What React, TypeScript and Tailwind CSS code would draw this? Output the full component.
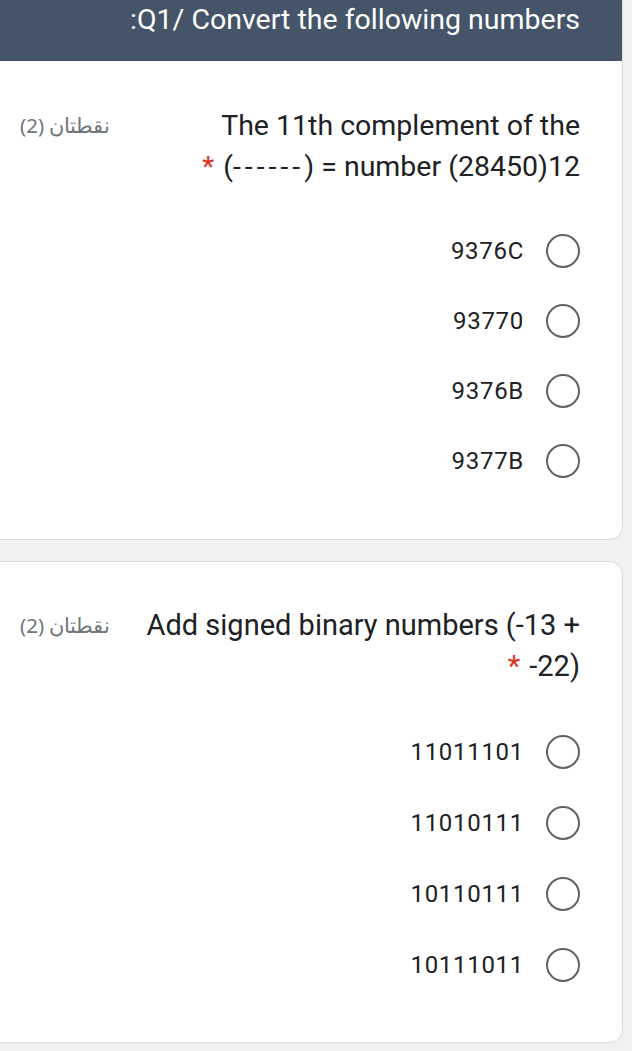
import React from "react";

const Radio = () => (
  <span className="block w-[34px] h-[34px] rounded-full border-[2.5px] border-[#5f6368] shrink-0" />
);

const Option = ({ label, tall }: { label: string; tall?: boolean }) => (
  <div className={`${tall ? "h-[71px]" : "h-[70px]"} flex items-center justify-end gap-[22px]`}>
    <span className="text-[24px] tracking-[0.7px] text-[#202124]">{label}</span>
    <Radio />
  </div>
);

const Star = () => <span className="text-[#d93025] mr-[9px]">*</span>;

export default function App() {
  return (
    <div
      className="min-h-[1051px] bg-[#f1f1f1] w-[632px] overflow-hidden"
      style={{ fontFamily: "Roboto, 'Noto Sans', sans-serif" }}
    >
      <div className="w-[623px] bg-white rounded-br-[14px] border-r border-b border-[#dadce0]">
        <div className="h-[61px] bg-[#455469] flex items-start justify-end pr-[42px] pt-[3px]">
          <span className="text-white text-[28.5px] leading-[34px]">:Q1/ Convert the following numbers</span>
        </div>
        <div className="pt-[44px] pb-[43px]">
          <div className="flex justify-between items-start pr-[42px] pl-[20px]">
            <span className="text-[#70757a] text-[20.5px] leading-[41px]" dir="rtl" style={{ fontFamily: "'Noto Sans', Roboto, sans-serif" }}>نقطتان (2)</span>
            <div className="text-right text-[28.5px] leading-[41px] text-[#202124]">
              <div>The 11th complement of the</div>
              <div><Star />(<span className="tracking-[4px]">------</span>) = number (28450)12</div>
            </div>
          </div>
          <div className="mt-[29px] pr-[42px]">
            <Option label="9376C" />
            <Option label="93770" />
            <Option label="9376B" />
            <Option label="9377B" />
          </div>
        </div>
      </div>
      <div className="h-[21px]" />
      <div className="w-[623px] bg-white rounded-r-[14px] border-r border-y border-[#dadce0]">
        <div className="pt-[43px] pb-[42px]">
          <div className="flex justify-between items-start pr-[42px] pl-[20px]">
            <span className="text-[#70757a] text-[20.5px] leading-[41px]" dir="rtl" style={{ fontFamily: "'Noto Sans', Roboto, sans-serif" }}>نقطتان (2)</span>
            <div className="text-right text-[29px] leading-[41px] text-[#202124]">
              <div>Add signed binary numbers (-13 +</div>
              <div><Star />-22)</div>
            </div>
          </div>
          <div className="mt-[29px] pr-[42px]">
            <Option tall label="11011101" />
            <Option tall label="11010111" />
            <Option tall label="10110111" />
            <Option tall label="10111011" />
          </div>
        </div>
      </div>
    </div>
  );
}
